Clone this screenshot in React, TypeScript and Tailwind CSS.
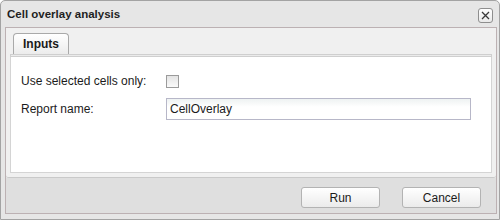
export default function App() {
  return (
    <div className="w-[500px] h-[220px] bg-[#e6e6e6] border border-[#a3a3a3] rounded-t-[5px] flex flex-col font-['Liberation_Sans',Arial,sans-serif] text-[#1b1b1b]">
      <div className="h-[26px] shrink-0 flex items-center justify-between pl-[6px] pr-[6px]">
        <span className="text-[11.5px] font-bold text-[#1f1f1f] mt-[2px]">Cell overlay analysis</span>
        <button className="w-[15px] h-[15px] mt-[3px] rounded-[3px] border border-[#8e8e8e] bg-gradient-to-b from-white to-[#e9e9e9] flex items-center justify-center">
          <svg width="9" height="9" viewBox="0 0 9 9">
            <path d="M1 1 L8 8 M8 1 L1 8" stroke="#3a3a3a" strokeWidth="1.3" />
          </svg>
        </button>
      </div>

      <div className="flex-1 ml-[4px] mr-[2px] mb-[5px] border border-[#bcb1b3] flex flex-col">
        <div className="bg-[#f0f0f0] px-[4px] pt-[5px] pb-[4px] rounded-b-[3px] border-b border-[#c9c9c9]">
          <div className="flex pl-[3px]">
            <div className="h-[21px] w-[56px] rounded-t-[4px] border border-b-0 border-[#a9a9a9] bg-gradient-to-b from-white to-[#ececec] flex items-center justify-center text-[12px] font-bold text-[#1a1a1a]">
              Inputs
            </div>
          </div>
          <div className="h-[3px] border border-[#cfcfcf] bg-[#ebebeb]"></div>
          <div className="h-[116px] bg-white border-x border-b border-[#d4d4d4] pl-[10px] pt-[17px] text-[12px] text-[#1b1b1b]">
            <div className="flex items-center h-[14px]">
              <span className="w-[145px]">Use selected cells only:</span>
              <span className="w-[13px] h-[13px] border border-[#9b9b9b] bg-gradient-to-b from-[#e4e4e4] to-[#fafafa]"></span>
            </div>
            <div className="flex items-center mt-[10px]">
              <span className="w-[145px]">Report name:</span>
              <div className="w-[305px] h-[22px] border border-[#b7b7c8] bg-gradient-to-b from-[#eef2f2] to-white to-[40%] pl-[3px] flex items-center">
                CellOverlay
              </div>
            </div>
          </div>
        </div>

        <div className="flex-1 bg-[#dfdfdf] flex items-start justify-end gap-[22px] pt-[9px] pr-[15px]">
          <button className="w-[79px] h-[21px] rounded-[3px] border border-[#b3b3b3] bg-gradient-to-b from-white to-[#ebebeb] text-[12px] text-[#1b1b1b]">
            Run
          </button>
          <button className="w-[79px] h-[21px] rounded-[3px] border border-[#b3b3b3] bg-gradient-to-b from-white to-[#ebebeb] text-[12px] text-[#1b1b1b]">
            Cancel
          </button>
        </div>
      </div>
    </div>
  );
}
